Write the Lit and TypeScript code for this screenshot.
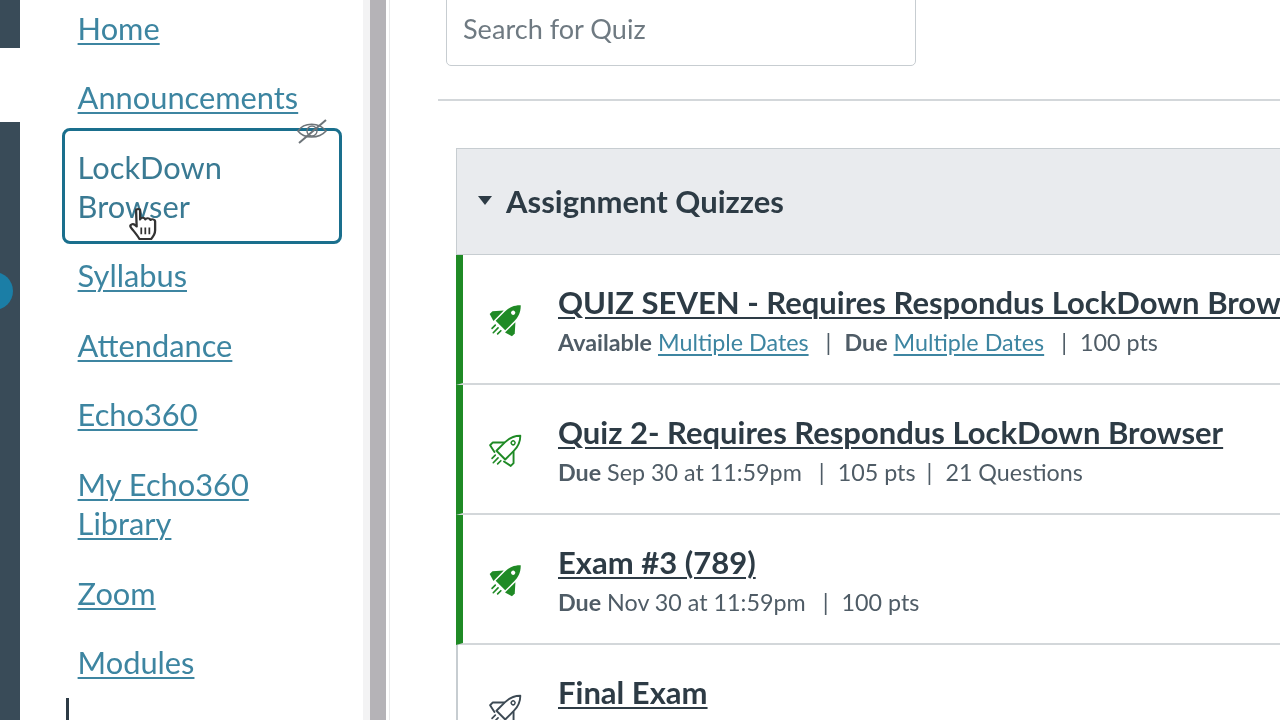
import { LitElement, html, css, svg } from "lit";
import { customElement } from "lit/decorators.js";

const rocket = (solid: boolean) => svg`
  <g transform="rotate(45 16 16)" stroke-linejoin="round" stroke-linecap="round">
    ${solid
      ? svg`
        <path fill="currentColor" d="M16 -2.5C20.8 2 22 7 22 12V23H10V12C10 7 11.2 2 16 -2.5Z"/>
        <circle cx="16" cy="7" r="1.9" fill="#fff"/>
        <path fill="currentColor" d="M8.7 11.5L2 19V22.5L8.7 24.5Z"/>
        <path fill="currentColor" d="M23.3 11.5L30 19V22.5L23.3 24.5Z"/>`
      : svg`
        <path fill="none" stroke="currentColor" stroke-width="1.7" d="M16 -2C20.5 2.5 21.5 8 21.5 12V22.5H10.5V12C10.5 8 11.5 2.5 16 -2Z"/>
        <circle cx="16" cy="7" r="1.7" fill="none" stroke="currentColor" stroke-width="1.3"/>
        <path fill="none" stroke="currentColor" stroke-width="1.7" d="M10 12.5L3 19.5V23L10 24.5"/>
        <path fill="none" stroke="currentColor" stroke-width="1.7" d="M22 12.5L29 19.5V23L22 24.5"/>`}
    <path fill="none" stroke="currentColor" stroke-width="1.5" d="M12.5 26V30M16 26V32M19.5 26V30"/>
  </g>`;

interface Quiz {
  title: string;
  solid: boolean;
  published: boolean;
  meta?: unknown;
}

const sep = html`<span class="sep">|</span>`;
const tightSep = html`<span class="sep tight">|</span>`;

const quizzes: Quiz[] = [
  {
    title: "QUIZ SEVEN - Requires Respondus LockDown Browser",
    solid: true,
    published: true,
    meta: html`<b>Available</b> <a href="#">Multiple Dates</a>${sep}<b>Due</b> <a href="#">Multiple Dates</a>${sep}<span>100 pts</span>`,
  },
  {
    title: "Quiz 2- Requires Respondus LockDown Browser",
    solid: false,
    published: true,
    meta: html`<b>Due</b> <span>Sep 30 at 11:59pm</span>${sep}<span>105 pts</span>${tightSep}<span>21 Questions</span>`,
  },
  {
    title: "Exam #3 (789)",
    solid: true,
    published: true,
    meta: html`<b>Due</b> <span>Nov 30 at 11:59pm</span>${sep}<span>100 pts</span>`,
  },
  { title: "Final Exam", solid: false, published: false },
];

@customElement("app-root")
export class AppRoot extends LitElement {
  static styles = css`
    :host {
      display: flex;
      width: 1280px;
      height: 720px;
      overflow: hidden;
      position: relative;
      background: #fff;
      font-family: Lato, "Open Sans", sans-serif;
      color: #2d3b45;
      filter: blur(0.4px);
    }
    .rail {
      width: 20px;
      flex: none;
      display: grid;
      grid-template-rows: 48px 74px 1fr;
      position: relative;
      overflow: hidden;
    }
    .rail .dark { background: #394b58; }
    .dot {
      position: absolute;
      left: -25px;
      top: 272px;
      width: 38px;
      height: 38px;
      border-radius: 50%;
      background: #1b7ea6;
    }
    .nav {
      width: 343px;
      flex: none;
      box-sizing: border-box;
      padding: 0 0 0 42px;
      margin-top: -6.8px;
      font-size: 30.8px;
      line-height: 39px;
    }
    .nav a {
      display: block;
      width: 280px;
      box-sizing: border-box;
      padding: 15.3px 15.6px;
      color: #3d85a1;
      text-decoration: none;
    }
    .nav a span {
      text-decoration: underline;
      text-decoration-thickness: 2px;
      text-underline-offset: 3px;
    }
    .nav a.focus {
      color: #3a7a93;
      position: relative;
    }
    .nav a.focus span { text-decoration: none; }
    .ring {
      position: absolute;
      left: 0;
      right: 0;
      top: -4px;
      bottom: -3px;
      border: 3.5px solid #1a6f8d;
      border-radius: 8px;
    }
    .eye {
      position: absolute;
      left: 233px;
      top: -16px;
      width: 34px;
      height: 30px;
    }
    .nav .next {
      margin-left: 4px;
      padding: 15.3px 0 15.3px 9px;
      border-left: 3px solid #2d3b45;
      font-weight: 700;
    }
    .gutter {
      width: 27px;
      flex: none;
      display: grid;
      grid-template-columns: 7px 16px 4px;
    }
    .gutter .line1 { background: #f3f3f4; }
    .gutter .bar { background: #b5b3b7; }
    .gutter .line2 { background: #fff; border-right: 1px solid #e9e9ea; }
    .main {
      flex: 1;
      min-width: 0;
      padding-left: 48px;
      overflow: hidden;
    }
    .search {
      box-sizing: border-box;
      margin: -10px 0 0 8px;
      width: 470px;
      height: 76px;
      border: 1.5px solid #c7cdd1;
      border-radius: 5px;
      display: flex;
      align-items: center;
      padding: 1px 0 0 16px;
      font-size: 27.1px;
      color: #6f7a82;
    }
    .divider {
      height: 2px;
      background: #d3d7da;
      margin-top: 33px;
    }
    .group {
      margin: 47px 0 0 18px;
      width: 900px;
    }
    .head {
      box-sizing: border-box;
      height: 107px;
      background: #e9ebee;
      border: 1.5px solid #c7cdd1;
      border-right: 0;
      display: flex;
      align-items: center;
      padding-left: 21px;
      gap: 14px;
      font-size: 31px;
      font-weight: 700;
      white-space: nowrap;
      padding-bottom: 2px;
    }
    .caret {
      width: 0;
      height: 0;
      border-left: 7px solid transparent;
      border-right: 7px solid transparent;
      border-top: 9px solid #2d3b45;
    }
    .row {
      box-sizing: border-box;
      height: 130px;
      display: flex;
      align-items: flex-start;
      border-left: 2px solid #c7cdd1;
      border-bottom: 2px solid #d3d7da;
      white-space: nowrap;
    }
    .row.pub { border-left: 7px solid #1f8a25; }
    .row.draft { padding-left: 5px; }
    .icon {
      width: 36px;
      height: 36px;
      margin: 47px 0 0 25px;
      flex: none;
      color: #1f8a25;
      overflow: visible;
    }
    .row.draft .icon { color: #3d4a54; }
    .body {
      margin-left: 34px;
      padding-top: 27px;
      width: 900px;
    }
    .title {
      font-size: 31px;
      line-height: 40px;
      font-weight: 700;
      color: #2d3b45;
      text-decoration: underline;
      text-decoration-thickness: 2px;
      text-underline-offset: 3px;
      display: block;
    }
    .meta {
      margin-top: 4px;
      font-size: 23.3px;
      line-height: 32px;
      color: #4f5c66;
    }
    .meta b { font-weight: 700; }
    .meta a {
      color: #3d85a1;
      text-decoration: underline;
      text-underline-offset: 3px;
    }
    .sep { margin: 0 13px 0 17px; color: #4f5c66; }
    .sep.tight { margin-left: 11px; }
    .cursor {
      position: absolute;
      left: 128px;
      top: 207px;
      width: 30px;
      height: 35px;
    }
  `;

  private navItem(label: string) {
    return html`<a href="#"><span>${label}</span></a>`;
  }

  render() {
    return html`
      <div class="rail">
        <div class="dark"></div>
        <div></div>
        <div class="dark"></div>
        <div class="dot"></div>
      </div>
      <nav class="nav">
        ${this.navItem("Home")}
        ${this.navItem("Announcements")}
        <a href="#" class="focus">
          <span>LockDown Browser</span>
          <div class="ring"></div>
          <svg class="eye" viewBox="0 0 34 30" fill="none" stroke="#6d7479" stroke-width="1.6">
            <path d="M3 15C9 6 24 6 31 15C24 23 9 23 3 15Z"/>
            <path d="M4 27L31 4" stroke-width="2"/>
            <circle cx="17" cy="15" r="5" stroke-width="1.4"/>
          </svg>
        </a>
        ${this.navItem("Syllabus")}
        ${this.navItem("Attendance")}
        ${this.navItem("Echo360")}
        ${this.navItem("My Echo360 Library")}
        ${this.navItem("Zoom")}
        ${this.navItem("Modules")}
        <div class="next">Quizzes</div>
      </nav>
      <div class="gutter">
        <div class="line1"></div>
        <div class="bar"></div>
        <div class="line2"></div>
      </div>
      <main class="main">
        <div class="search">Search for Quiz</div>
        <div class="divider"></div>
        <section class="group">
          <div class="head"><span class="caret"></span><span>Assignment Quizzes</span></div>
          ${quizzes.map(
            (q) => html`
              <div class="row ${q.published ? "pub" : "draft"}">
                <svg class="icon" viewBox="0 0 32 32">${rocket(q.solid)}</svg>
                <div class="body">
                  <a class="title" href="#">${q.title}</a>
                  ${q.meta ? html`<div class="meta">${q.meta}</div>` : ""}
                </div>
              </div>
            `
          )}
        </section>
      </main>
      <svg class="cursor" viewBox="0 0 26 36" preserveAspectRatio="none">
        <path fill="#fff" stroke="#333" stroke-width="2" stroke-linejoin="round"
          d="M7 3.5C7 1.5 10.5 1.5 10.5 3.5V13C11 10.5 14.5 10.5 15 13C15.5 11 19 11 19.5 13.5C20 12 23.5 12.5 23.5 15V24C23.5 28 21.5 31 20 33H10C8 29 5 25 2.5 21C1 18.5 4 16.5 6 18.5L7.5 20Z"/>
        <path stroke="#333" stroke-width="1.5" d="M11.5 21V28M15 21V28M18.5 21V28"/>
      </svg>
    `;
  }
}
